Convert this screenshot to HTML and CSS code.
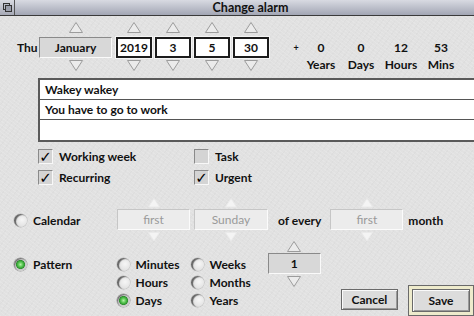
FILE: index.html
```html
<!DOCTYPE html>
<html lang="en">
<head>
    <meta charset="UTF-8">
    <title>Change alarm</title>
    <link rel="stylesheet" href="styles.css">
</head>
<body>
<div class="window">
    <!-- Title bar -->
    <div class="titlebar">
        <div class="back-icon">
            <svg width="9" height="9" viewBox="0 0 9 9">
                <rect x="0.5" y="0.5" width="6" height="6" fill="#b8bbc6" stroke="#333"/>
                <rect x="2.5" y="2.5" width="6" height="6" fill="#9a9eab" stroke="#333"/>
            </svg>
        </div>
        <div class="title">Change alarm</div>
    </div>

    <div class="content">
        <!-- Date and interval -->
        <div class="date-row">
            <span class="day">Thu</span>
            <div class="spinner w-month">
                <svg class="arrow up" viewBox="0 0 14 11"><polygon points="7,0.5 13.5,10.5 0.5,10.5"/></svg>
                <div class="field display">January</div>
                <svg class="arrow down" viewBox="0 0 14 11"><polygon points="0.5,0.5 13.5,0.5 7,10.5"/></svg>
            </div>
            <div class="spinner w-num gap4">
                <svg class="arrow up" viewBox="0 0 14 11"><polygon points="7,0.5 13.5,10.5 0.5,10.5"/></svg>
                <div class="field write">2019</div>
                <svg class="arrow down" viewBox="0 0 14 11"><polygon points="0.5,0.5 13.5,0.5 7,10.5"/></svg>
            </div>
            <div class="spinner w-num gap3">
                <svg class="arrow up" viewBox="0 0 14 11"><polygon points="7,0.5 13.5,10.5 0.5,10.5"/></svg>
                <div class="field write">3</div>
                <svg class="arrow down" viewBox="0 0 14 11"><polygon points="0.5,0.5 13.5,0.5 7,10.5"/></svg>
            </div>
            <div class="spinner w-num gap3">
                <svg class="arrow up" viewBox="0 0 14 11"><polygon points="7,0.5 13.5,10.5 0.5,10.5"/></svg>
                <div class="field write">5</div>
                <svg class="arrow down" viewBox="0 0 14 11"><polygon points="0.5,0.5 13.5,0.5 7,10.5"/></svg>
            </div>
            <div class="spinner w-num gap3">
                <svg class="arrow up" viewBox="0 0 14 11"><polygon points="7,0.5 13.5,10.5 0.5,10.5"/></svg>
                <div class="field write">30</div>
                <svg class="arrow down" viewBox="0 0 14 11"><polygon points="0.5,0.5 13.5,0.5 7,10.5"/></svg>
            </div>

            <span class="plus">+</span>
            <div class="interval"><span class="num">0</span><span class="unit">Years</span></div>
            <div class="interval"><span class="num">0</span><span class="unit">Days</span></div>
            <div class="interval"><span class="num">12</span><span class="unit">Hours</span></div>
            <div class="interval"><span class="num">53</span><span class="unit">Mins</span></div>
        </div>

        <!-- Message -->
        <div class="message">
            <div class="line">Wakey wakey</div>
            <div class="line">You have to go to work</div>
            <div class="line"></div>
        </div>

        <!-- Flags -->
        <div class="flags">
            <div class="check"><span class="box">&#10003;</span>Working week</div>
            <div class="check"><span class="box"></span>Task</div>
            <div class="check"><span class="box">&#10003;</span>Recurring</div>
            <div class="check"><span class="box">&#10003;</span>Urgent</div>
        </div>

        <!-- Calendar repeat -->
        <div class="calendar-row">
            <div class="option w-option"><span class="radio"></span>Calendar</div>
            <div class="spinner w-month off">
                <svg class="arrow up" viewBox="0 0 14 11"><polygon points="7,0.5 13.5,10.5 0.5,10.5"/></svg>
                <div class="field disabled">first</div>
                <svg class="arrow down" viewBox="0 0 14 11"><polygon points="0.5,0.5 13.5,0.5 7,10.5"/></svg>
            </div>
            <div class="spinner w-day gap4 off">
                <svg class="arrow up" viewBox="0 0 14 11"><polygon points="7,0.5 13.5,10.5 0.5,10.5"/></svg>
                <div class="field disabled">Sunday</div>
                <svg class="arrow down" viewBox="0 0 14 11"><polygon points="0.5,0.5 13.5,0.5 7,10.5"/></svg>
            </div>
            <span class="cal-text every">of every</span>
            <div class="spinner w-month gap-of off">
                <svg class="arrow up" viewBox="0 0 14 11"><polygon points="7,0.5 13.5,10.5 0.5,10.5"/></svg>
                <div class="field disabled">first</div>
                <svg class="arrow down" viewBox="0 0 14 11"><polygon points="0.5,0.5 13.5,0.5 7,10.5"/></svg>
            </div>
            <span class="cal-text month-label">month</span>
        </div>

        <!-- Pattern repeat -->
        <div class="pattern-row">
            <div class="option w-option pattern"><span class="radio on"></span>Pattern</div>
            <div class="units col1">
                <div class="option"><span class="radio"></span>Minutes</div>
                <div class="option"><span class="radio"></span>Hours</div>
                <div class="option"><span class="radio on"></span>Days</div>
            </div>
            <div class="units col2">
                <div class="option"><span class="radio"></span>Weeks</div>
                <div class="option"><span class="radio"></span>Months</div>
                <div class="option"><span class="radio"></span>Years</div>
            </div>
            <div class="spinner w-count">
                <svg class="arrow up" viewBox="0 0 14 11"><polygon points="7,0.5 13.5,10.5 0.5,10.5"/></svg>
                <div class="field display">1</div>
                <svg class="arrow down" viewBox="0 0 14 11"><polygon points="0.5,0.5 13.5,0.5 7,10.5"/></svg>
            </div>
            <button class="btn cancel">Cancel</button>
            <div class="default-ring"><button class="btn save">Save</button></div>
        </div>
    </div>
</div>
</body>
</html>
```

FILE: styles.css
```css
/* Window */
* {
    box-sizing: border-box;
}

body {
    margin: 0;
    background: #e2e2e2;
    font-family: Lato, "Liberation Sans", sans-serif;
    font-weight: bold;
    font-size: 12px;
    color: #111;
}

.window {
    width: 474px;
    height: 316px;
    overflow: hidden;
    background-color: #e1e1e1;
    background-image:
        repeating-linear-gradient(37deg, rgba(255, 255, 255, 0.14) 0 1px, transparent 1px 3px),
        repeating-linear-gradient(-53deg, rgba(0, 0, 0, 0.02) 0 1px, transparent 1px 5px);
}

/* Title bar */
.titlebar {
    display: flex;
    height: 16px;
    border-bottom: 1px solid #3a3a3a;
}

.back-icon {
    width: 15px;
    border-right: 1px solid #555;
    background: linear-gradient(#d8dae1, #a6a9b6);
    display: flex;
    align-items: center;
    justify-content: center;
}

.title {
    flex: 1;
    text-align: center;
    line-height: 15px;
    padding-left: 12px;
    font-size: 12.5px;
    background: linear-gradient(#d8dae2, #a2a6b4);
}

.content {
    display: flex;
    flex-direction: column;
}

/* Spinners (arrow, field, arrow) */
.spinner {
    display: flex;
    flex-direction: column;
    align-items: center;
}

.arrow {
    display: block;
    width: 14px;
    height: 11px;
}

.arrow polygon {
    fill: #ebebeb;
    stroke: #9c9c9c;
    stroke-width: 1;
}

.spinner.off .arrow polygon {
    fill: #f4f4f4;
    stroke: #e9e9e9;
}

.spinner .arrow.up {
    margin-bottom: 1px;
}

.spinner .arrow.down {
    margin-top: 2px;
}

.date-row .arrow.up {
    margin-bottom: 4px;
}

.field {
    width: 100%;
    height: 21px;
    line-height: 19px;
    text-align: center;
    white-space: nowrap;
}

.field.display {
    background: #d8d8d8;
    border: 1px solid;
    border-color: #8a8a8a #fafafa #fafafa #8a8a8a;
}

.field.write {
    background: #fff;
    border: 2px solid #1c1c1c;
    line-height: 17px;
    box-shadow: 0 0 0 1px #f4f4f4;
}

.field.disabled {
    background: #ececec;
    color: #9a9a9a;
    font-weight: normal;
    border: 1px solid;
    border-color: #c6c6c6 #fbfbfb #fbfbfb #c6c6c6;
}

.w-month { width: 73px; }
.w-day { width: 74px; }
.w-num { width: 36px; }
.w-count { width: 54px; }
.gap3 { margin-left: 3px; }
.gap4 { margin-left: 4px; }
.gap-of { margin-left: 9px; }

/* Date row */
.date-row {
    display: flex;
    margin-top: 6px;
    height: 49px;
}

.day {
    margin: 15px 0 0 17px;
    width: 22px;
    line-height: 21px;
}

.plus {
    margin: 15px 0 0 22px;
    width: 10px;
    line-height: 21px;
    text-align: center;
    font-size: 9px;
}

.interval {
    width: 40px;
    margin-top: 15px;
    display: flex;
    flex-direction: column;
    align-items: center;
}

.num {
    line-height: 21px;
}

.unit {
    line-height: 14px;
}

/* Message */
.message {
    margin: 7px -8px 0 38px;
    background: #fff;
    border: 2px solid #5a5a5a;
}

.line {
    height: 20px;
    line-height: 20px;
    padding-left: 5px;
    border-bottom: 1px solid #555;
}

.line:last-child {
    border-bottom: 0;
}

/* Flags */
.flags {
    display: grid;
    grid-template-columns: 156px auto;
    row-gap: 6px;
    margin: 7px 0 0 38px;
}

.check {
    display: flex;
    align-items: center;
    height: 15px;
}

.box {
    width: 15px;
    height: 15px;
    margin-right: 6px;
    background: #d4d4d4;
    border: 1px solid;
    border-color: #8a8a8a #f8f8f8 #f8f8f8 #8a8a8a;
    font-family: "DejaVu Sans", sans-serif;
    font-size: 15px;
    line-height: 14px;
    text-align: center;
    color: #000;
}

/* Radio options */
.option {
    display: flex;
    align-items: center;
    height: 18px;
}

.radio {
    width: 13px;
    height: 13px;
    margin-right: 6px;
    border-radius: 50%;
    background: radial-gradient(circle at 62% 45%, #f6f6f6 0, #e4e4e4 55%, #c8c8c8 100%);
    box-shadow: inset 2px 1px 1px rgba(0, 0, 0, 0.55), 0 0 0 0.5px #bbb;
}

.radio.on {
    background: radial-gradient(circle at 50% 50%, #b6f0a8 0, #4fc24a 28%, #2f8f30 46%, #c6c6c6 52%, #e6e6e6 100%);
    box-shadow: inset 1px 1px 1px rgba(0, 0, 0, 0.45), 0 0 0 0.5px #999;
}

.w-option {
    width: 103px;
    margin-left: 14px;
}

/* Calendar row */
.calendar-row {
    display: flex;
    margin-top: 13px;
    height: 43px;
}

.calendar-row .option {
    margin-top: 12px;
    height: 21px;
}

.cal-text {
    margin-top: 12px;
    line-height: 21px;
}

.every {
    margin-left: 10px;
}

.month-label {
    margin-left: 5px;
}

/* Pattern row */
.pattern-row {
    display: flex;
    height: 73px;
}

.pattern-row .pattern {
    margin-top: 14px;
    width: 104px;
}

.units {
    margin-top: 14px;
}

.col1 { width: 75px; }
.col2 { width: 78px; }

/* Buttons */
.btn {
    font: inherit;
    color: #111;
    background: #dcdcdc;
    border: 1px solid #6a6a6a;
    box-shadow: inset 1px 1px 0 #fafafa, inset -1px -1px 0 #9a9a9a;
    padding: 0;
}

.cancel {
    width: 58px;
    height: 21px;
    margin: 48px 0 0 20px;
}

.default-ring {
    width: 66px;
    height: 31px;
    margin: 44px 0 0 10px;
    padding: 3px;
    background: #eeebcc;
    border: 1px solid #6a6a6a;
    flex-shrink: 0;
}

.save {
    width: 100%;
    height: 100%;
    line-height: 21px;
}
```
